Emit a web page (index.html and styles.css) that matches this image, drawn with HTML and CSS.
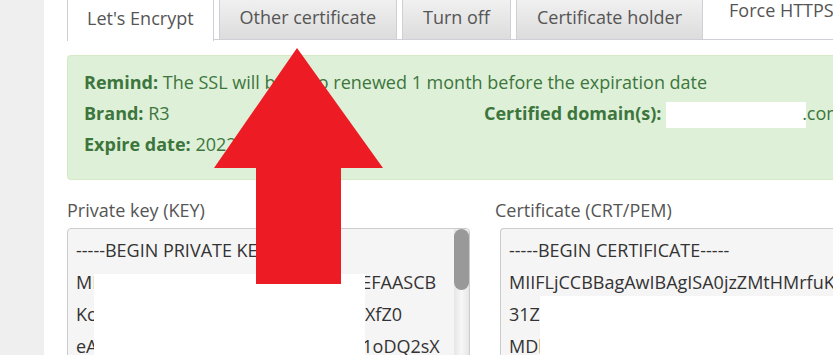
FILE: index.html
```html
<!DOCTYPE html>
<html lang="en">
<head>
    <meta charset="UTF-8">
    <meta name="viewport" content="width=device-width, initial-scale=1.0">
    <title>SSL</title>
    <link rel="stylesheet" href="styles.css">
</head>
<body>
    <div class="sidebar"></div>

    <div class="panel">
        <ul class="tabs">
            <li class="tab active">Let's Encrypt</li>
            <li class="tab">Other certificate</li>
            <li class="tab">Turn off</li>
            <li class="tab">Certificate holder</li>
            <li class="tab plain">Force HTTPS</li>
        </ul>

        <div class="alert">
            <div class="row"><b>Remind:</b> The SSL will be auto renewed 1 month before the expiration date</div>
            <div class="row split">
                <div><b>Brand:</b> R3</div>
                <div><b>Certified domain(s):</b> <span class="mask"></span>.com</div>
            </div>
            <div class="row"><b>Expire date:</b> 2022-03-18</div>
        </div>

        <div class="fields">
            <div class="field">
                <label>Private key (KEY)</label>
                <div class="box">
                    <div class="code">-----BEGIN PRIVATE KEY-----
MIIEvQIBADANBgkqhkiG9w0BzAQEFAASCB
KcJ8hLmQw2RtYpZs4VnUoAGkpqxXfZ0
eA9uTgP3kLqWcZx7bVnRm4UvaEj1oDQ2sX
u7XcTq2LmNb0RfGs9AhKjWyVe3PdZo
Wz6sKpLd8JfNqTbXgRm0Ya2VcUe7H
-----END PRIVATE KEY-----</div>
                    <div class="mask mask-key"></div>
                    <div class="scrollbar"><div class="thumb"></div></div>
                </div>
            </div>
            <div class="field">
                <label>Certificate (CRT/PEM)</label>
                <div class="box cert">
                    <div class="code">-----BEGIN CERTIFICATE-----
MIIFLjCCBBagAwIBAgISA0jzZMtHMrfuKq8yR2ZhXbVwMA0GCSqG
31ZxPmQ7tLkVnRc2aWfH8uYeJ0bDsGi4oTqN9vKzXpMlC3hA6ES
MDkUw5rTgYc1NbHqPzLa7oVjXs2FmRe9WiKt0DyGu4CnBxAlJhQ
-----END CERTIFICATE-----</div>
                    <div class="mask mask-cert"></div>
                </div>
            </div>
        </div>
    </div>

    <svg class="arrow" width="170" height="238" viewBox="0 0 170 238">
        <polygon points="83,0 169,120 127,120 127,236 42,236 42,120 0,120" fill="#ed1c24"/>
    </svg>
</body>
</html>
```

FILE: styles.css
```css
body {
    margin: 0;
    display: flex;
    min-height: 100vh;
    font-family: 'Open Sans', 'Noto Sans', sans-serif;
    font-size: 18px;
    color: #555;
    background: #fff;
    overflow: hidden;
}

.sidebar {
    width: 44px;
    flex-shrink: 0;
    background: #efefef;
}

.panel {
    flex: 1;
    min-width: 0;
    padding-left: 23px;
    margin-top: -6px;
}

/* tabs */
.tabs {
    list-style: none;
    margin: 0;
    padding: 0;
    display: flex;
    align-items: stretch;
    height: 45px;
    border-bottom: 1px solid #cfcfd6;
    white-space: nowrap;
}

.tab {
    display: flex;
    align-items: center;
    padding: 0 20px;
    margin-right: 5px;
    border: 1px solid #cfcfd6;
    border-bottom: none;
    background: linear-gradient(#f3f3f3, #dcdcdc);
}

.tab.active {
    padding: 0 19px;
    background: #fff;
    height: 46px;
}

.tab.plain {
    background: none;
    border: none;
    align-items: flex-start;
    padding: 4px 0 0 21px;
    margin-right: 0;
}

/* alert */
.alert {
    margin-top: 15px;
    padding: 11px 16px 19px;
    background: #dff0d8;
    border: 1px solid #d6e9c6;
    border-right: none;
    border-radius: 4px 0 0 4px;
    color: #3c763d;
    font-size: 18px;
    line-height: 31px;
    white-space: nowrap;
}

.alert b {
    font-weight: 700;
}

.split {
    display: grid;
    grid-template-columns: 400px 1fr;
}

.alert .mask {
    display: inline-block;
    width: 140px;
    height: 26px;
    margin-right: -4px;
    vertical-align: middle;
    background: #fff;
}

/* key / cert fields */
.fields {
    display: grid;
    grid-template-columns: 403px 1fr;
    column-gap: 25px;
    margin-top: 19px;
}

.field label {
    display: block;
    height: 29px;
    line-height: 22px;
    color: #555;
}

.box {
    position: relative;
    height: 200px;
    border: 1px solid #ccc;
    border-radius: 4px;
    background: #f5f5f5;
    overflow: hidden;
}

.box.cert {
    margin-left: 5px;
    border-right: none;
    border-radius: 4px 0 0 4px;
}

.code {
    height: 100%;
    overflow: hidden;
    box-sizing: border-box;
    padding: 5px 8px;
    white-space: pre;
    line-height: 32px;
    color: #333;
}

.box .mask {
    position: absolute;
    background: #fff;
}

.mask-key {
    left: 26px;
    top: 45px;
    width: 271px;
    height: 160px;
}

.mask-cert {
    left: 39px;
    top: 67px;
    right: 0;
    height: 140px;
}

/* drawn scrollbar of the key box */
.scrollbar {
    position: absolute;
    top: 0;
    right: 0;
    width: 15px;
    height: 100%;
    background: linear-gradient(90deg, #e6e6e6, #f7f7f7 50%, #e6e6e6);
}

.thumb {
    height: 61px;
    border-radius: 8px;
    background: #999;
}

/* pointer arrow drawn over the page */
.arrow {
    position: absolute;
    left: 214px;
    top: 48px;
}
```
